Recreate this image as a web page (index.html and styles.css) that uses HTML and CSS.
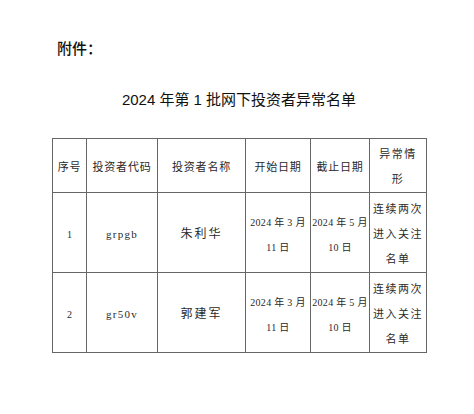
FILE: index.html
```html
<!DOCTYPE html>
<html lang="zh">
<head>
<meta charset="utf-8">
<link rel="stylesheet" href="styles.css">
</head>
<body>
<div class="page">
  <p class="label">附件：</p>
  <h1 class="title">2024 年第 1 批网下投资者异常名单</h1>
  <table class="list">
    <colgroup>
      <col class="c1"><col class="c2"><col class="c3"><col class="c4"><col class="c5"><col class="c6">
    </colgroup>
    <tr class="head">
      <td>序号</td>
      <td>投资者代码</td>
      <td>投资者名称</td>
      <td>开始日期</td>
      <td>截止日期</td>
      <td class="wrap">异常情<br>形</td>
    </tr>
    <tr class="r1">
      <td class="num">1</td>
      <td class="code">grpgb</td>
      <td class="name">朱利华</td>
      <td class="date">2024 年 3 月<br>11 日</td>
      <td class="date">2024 年 5 月<br>10 日</td>
      <td class="wrap">连续两次<br>进入关注<br>名单</td>
    </tr>
    <tr class="r2">
      <td class="num">2</td>
      <td class="code">gr50v</td>
      <td class="name">郭建军</td>
      <td class="date">2024 年 3 月<br>11 日</td>
      <td class="date">2024 年 5 月<br>10 日</td>
      <td class="wrap">连续两次<br>进入关注<br>名单</td>
    </tr>
  </table>
</div>
</body>
</html>
```

FILE: styles.css
```css
html, body {
  margin: 0;
  padding: 0;
  background: #fff;
}

.page {
  display: flex;
  flex-direction: column;
  padding: 0 0 0 52px;
  color: #111;
}

.label {
  margin: 38px 0 0 5px;
  font-family: "Noto Sans CJK SC", sans-serif;
  font-size: 15px;
  line-height: 20px;
  font-weight: 500;
}

.title {
  margin: 32px 0 0 0;
  width: 374px;
  text-align: center;
  font-family: "Liberation Sans", "Noto Sans CJK SC", sans-serif;
  font-size: 15px;
  line-height: 20px;
  font-weight: 400;
}

.list {
  margin-top: 28px;
  border-collapse: collapse;
  table-layout: fixed;
  width: 375px;
  font-family: "Liberation Serif", "Noto Sans CJK SC", serif;
  font-size: 11px;
  color: #2a2a2a;
}

.c1 { width: 34px; }
.c2 { width: 71px; }
.c3 { width: 88px; }
.c4 { width: 65px; }
.c5 { width: 59px; }
.c6 { width: 57px; }

.list td {
  border: 1px solid #666;
  text-align: center;
  vertical-align: middle;
  padding: 4px 0 0;
  line-height: 25px;
  letter-spacing: 0.8px;
  white-space: nowrap;
  overflow: hidden;
}

.list .head td {
  padding-top: 3px;
}

.head { height: 53px; }
.r1 { height: 80px; }
.r2 { height: 79px; }

.list .num {
  font-size: 10px;
  letter-spacing: 0;
}

.list .code {
  font-size: 11px;
  letter-spacing: 1.3px;
}

.list .name {
  font-size: 12px;
  letter-spacing: 2px;
}

.list .date {
  font-size: 10px;
  letter-spacing: 0.3px;
}

.list .wrap {
  letter-spacing: 1.5px;
}
```
